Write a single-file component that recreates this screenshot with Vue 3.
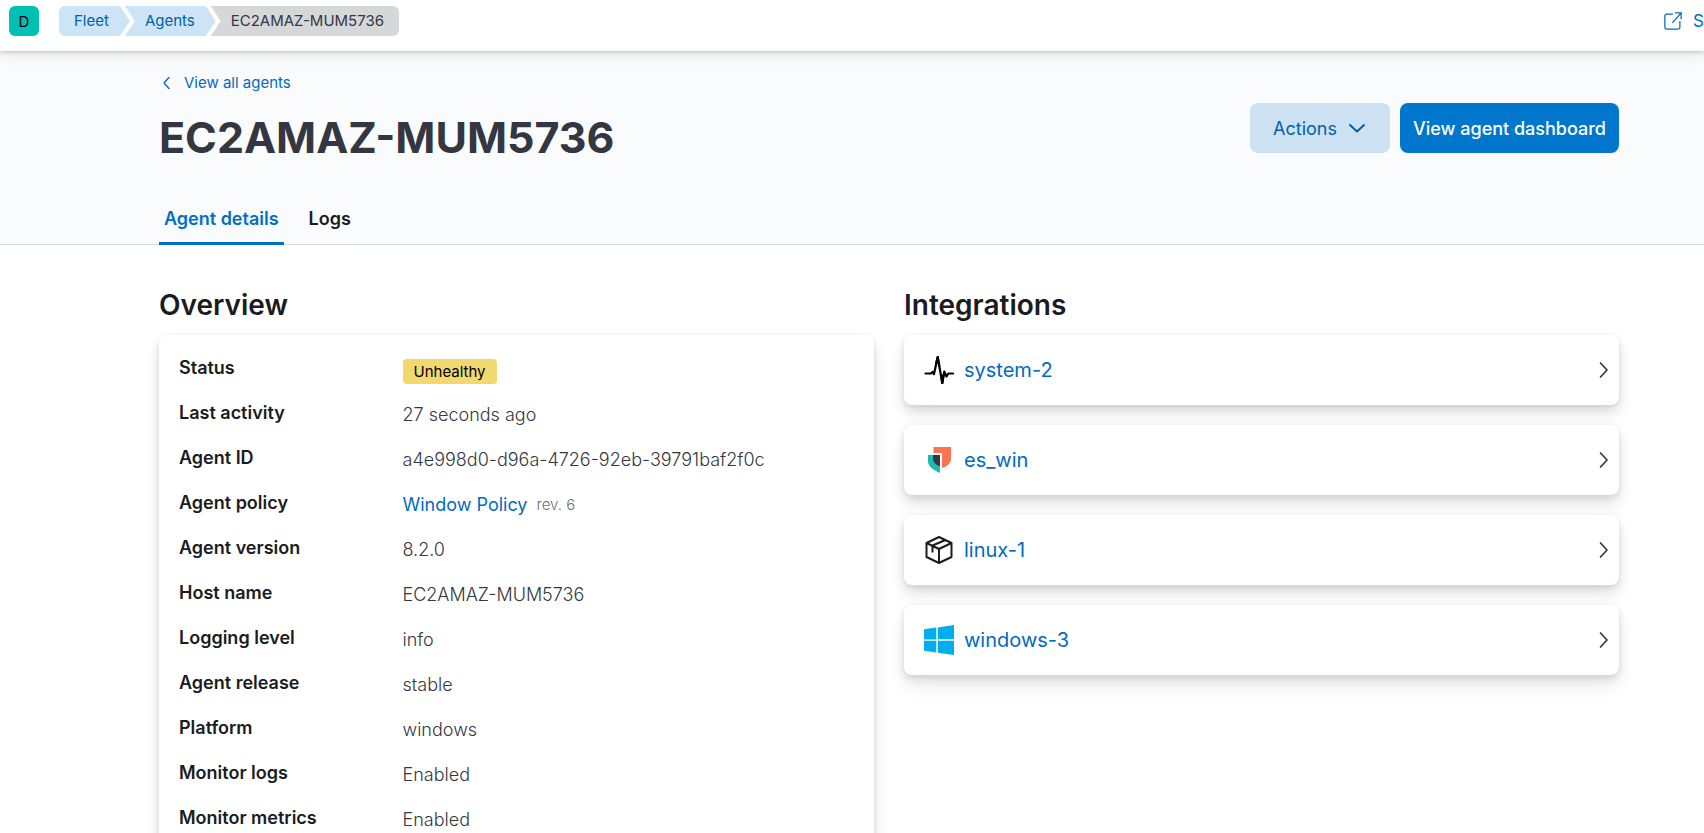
<script setup>
const details = [
  { label: 'Status', badge: 'Unhealthy' },
  { label: 'Last activity', value: '27 seconds ago' },
  { label: 'Agent ID', value: 'a4e998d0-d96a-4726-92eb-39791baf2f0c' },
  { label: 'Agent policy', link: 'Window Policy', note: 'rev. 6' },
  { label: 'Agent version', value: '8.2.0' },
  { label: 'Host name', value: 'EC2AMAZ-MUM5736' },
  { label: 'Logging level', value: 'info' },
  { label: 'Agent release', value: 'stable' },
  { label: 'Platform', value: 'windows' },
  { label: 'Monitor logs', value: 'Enabled' },
  { label: 'Monitor metrics', value: 'Enabled' },
]

const integrations = [
  { name: 'system-2', icon: 'pulse' },
  { name: 'es_win', icon: 'shield' },
  { name: 'linux-1', icon: 'package' },
  { name: 'windows-3', icon: 'windows' },
]
</script>

<template>
  <div class="page">
    <header class="topbar">
      <button class="avatar" type="button">D</button>
      <nav class="crumbs" aria-label="Breadcrumb">
        <a class="crumb first" href="#">Fleet</a>
        <a class="crumb middle" href="#">Agents</a>
        <span class="crumb last" aria-current="page">EC2AMAZ-MUM5736</span>
      </nav>
      <a class="feedback" href="#">
        <svg width="20" height="20" viewBox="0 0 16 16" fill="none" stroke="currentColor">
          <path d="M8 2.5H2.9A1.4 1.4 0 0 0 1.5 3.9v9.200a1.400 1.400 0 0 0 1.400 1.400h9.200a1.400 1.400 0 0 0 1.400-1.400V8" />
          <path d="M7.500 9.500 14.300 1.700M9.500 1.500h5v5" />
        </svg>
        <span>S</span>
      </a>
    </header>

    <section class="hero">
      <div class="hero-row">
        <div class="heading">
          <a class="back" href="#">
            <svg width="14" height="14" viewBox="0 0 14 14" fill="none" stroke="currentColor" stroke-width="1.300" stroke-linecap="round" stroke-linejoin="round">
              <path d="M10 1.500 5 7l5 5.500" />
            </svg>
            <span>View all agents</span>
          </a>
          <h1>EC2AMAZ-MUM5736</h1>
        </div>
        <div class="buttons">
          <button class="btn light" type="button">
            <span>Actions</span>
            <svg width="20" height="20" viewBox="0 0 20 20" fill="none" stroke="currentColor" stroke-width="2" stroke-linecap="round" stroke-linejoin="round">
              <path d="M3 7l7 6.500L17 7" />
            </svg>
          </button>
          <button class="btn fill" type="button">View agent dashboard</button>
        </div>
      </div>
      <nav class="tabs" aria-label="Agent sections">
        <a class="tab active" href="#" aria-current="page">Agent details</a>
        <a class="tab" href="#">Logs</a>
      </nav>
    </section>

    <main class="content">
      <section>
        <h2>Overview</h2>
        <dl class="panel details">
          <div v-for="row in details" :key="row.label" class="row">
            <dt>{{ row.label }}</dt>
            <dd>
              <span v-if="row.badge" class="badge">{{ row.badge }}</span>
              <template v-else-if="row.link">
                <a href="#">{{ row.link }}</a><span class="note">{{ row.note }}</span>
              </template>
              <template v-else>{{ row.value }}</template>
            </dd>
          </div>
        </dl>
      </section>

      <section>
        <h2>Integrations</h2>
        <ul class="cards">
          <li v-for="item in integrations" :key="item.name" class="panel card">
            <svg v-if="item.icon === 'pulse'" width="30" height="30" viewBox="0 0 30 30" fill="none" stroke="#000" stroke-width="2.200" stroke-linecap="round" stroke-linejoin="round">
              <path d="M1.500 18.500H7l1.500-1.500 1.500 2L13.700 2l4.600 26 2-11.500 2.200 5 1.800-3H29" />
              <path d="M12 9l1.700-7 1.600 9M17 20l1.300 8 1.200-8" />
            </svg>
            <svg v-else-if="item.icon === 'shield'" width="30" height="30" viewBox="0 0 30 30">
              <path fill="#fa744e" d="M9.500 2H27v11.500c0 4.500-3 7.500-9 9.500V8H9.500z" />
              <path fill="#1dbab0" d="M4 10h5v4c0 3.500 2.500 6 7 7.500V28C8 24.500 4 21 4 16z" />
              <path fill="#343741" d="M9 10h7v11.500C11.500 20 9 17.500 9 14z" />
            </svg>
            <svg v-else-if="item.icon === 'package'" width="30" height="30" viewBox="0 0 30 30" fill="none" stroke="#1a1c21" stroke-width="2" stroke-linejoin="round">
              <path d="M15 2 27.500 8v14L15 28 2.500 22V8z" />
              <path d="M2.500 8 15 14l12.500-6M15 14v14M8.500 17.500v-7L21.500 5" />
            </svg>
            <svg v-else width="30" height="30" viewBox="0 0 30 30" fill="#00adef">
              <path d="M0 4.300 12.300 2.600v11.800H0zM13.800 2.400 30 0v14.300H13.800zM0 15.800h12.300v11.700L0 25.800zM13.800 15.800H30V30l-16.200-2.300z" />
            </svg>
            <a class="name" href="#">{{ item.name }}</a>
            <button class="expand" type="button" :aria-label="'Expand ' + item.name">
              <svg width="20" height="20" viewBox="0 0 20 20" fill="none" stroke="#343741" stroke-width="1.700" stroke-linecap="round" stroke-linejoin="round">
                <path d="M6.500 3l6.500 7-6.500 7" />
              </svg>
            </button>
          </li>
        </ul>
      </section>
    </main>
  </div>
</template>

<style>
body {
  background: #fff;
  overflow: hidden;
}
</style>

<style scoped>
.page {
  font-family: Inter, "Liberation Sans", sans-serif;
  font-size: 18px;
  line-height: 25px;
  color: #343741;
}
a {
  color: #006bc0;
  text-decoration: none;
}
button {
  border: 0;
  font: inherit;
  cursor: pointer;
}
svg {
  flex: none;
  display: block;
}
h1,
h2,
dl,
dd,
ul {
  margin: 0;
  padding: 0;
}

.topbar {
  position: relative;
  display: flex;
  align-items: center;
  box-sizing: border-box;
  height: 51px;
  padding: 0 0 9px 9px;
  background: #fff;
  font-size: 15px;
  box-shadow: 0 1px 4px rgba(0, 0, 0, 0.22), 0 5px 12px rgba(0, 0, 0, 0.05), 0 10px 15px rgba(0, 0, 0, 0.02);
}
.avatar {
  width: 30px;
  height: 30px;
  padding: 0;
  border-radius: 6px;
  background: #00bfb3;
  color: #000;
}
.crumbs {
  display: flex;
  margin-left: 20px;
  line-height: 30px;
}
.crumb {
  background: #cce4f5;
  color: #0061a6;
}
.first {
  padding: 0 21px 0 15px;
  border-radius: 6px 0 0 6px;
  clip-path: polygon(0 0, calc(100% - 10px) 0, 100% 50%, calc(100% - 10px) 100%, 0 100%);
}
.middle {
  margin-left: -5px;
  padding: 0 21px 0 20px;
  clip-path: polygon(0 0, calc(100% - 10px) 0, 100% 50%, calc(100% - 10px) 100%, 0 100%, 10px 50%);
}
.last {
  margin-left: -5px;
  padding: 0 15px 0 20px;
  border-radius: 0 6px 6px 0;
  background: #d6d7d9;
  color: #343741;
  clip-path: polygon(0 0, 100% 0, 100% 100%, 0 100%, 10px 50%);
}
.feedback {
  display: flex;
  align-items: center;
  gap: 10px;
  margin-left: auto;
  font-size: 17px;
}

.hero {
  padding: 20px 85px 0 159px;
  border-bottom: 1px solid #d3dae6;
  background: #fafbfd;
}
.hero-row {
  display: flex;
  align-items: center;
  justify-content: space-between;
}
.back {
  display: flex;
  align-items: center;
  gap: 11px;
  font-size: 15px;
  line-height: 24px;
}
h1 {
  margin-top: 17px;
  font-size: 43px;
  line-height: 50px;
  font-weight: 700;
}
.buttons {
  display: flex;
  gap: 10px;
  margin-top: 23px;
}
.btn {
  display: flex;
  align-items: center;
  gap: 10px;
  height: 50px;
  border-radius: 8px;
}
.light {
  padding: 0 23px;
  background: #cce2f2;
  color: #0061a6;
}
.fill {
  padding: 0 13px;
  background: #0077cc;
  color: #fff;
  font-weight: 500;
}
.tabs {
  display: flex;
  gap: 20px;
  margin: 34px 0 -1px;
}
.tab {
  padding: 10px 5px 11px;
  border-bottom: 3px solid transparent;
  color: #1a1c21;
  font-weight: 600;
}
.active {
  border-color: #0071c2;
  color: #0071c2;
}

.content {
  display: grid;
  grid-template-columns: 1fr 1fr;
  gap: 30px;
  padding: 40px 85px 0 159px;
}
h2 {
  margin-bottom: 10px;
  color: #1a1c21;
  font-size: 28px;
  line-height: 40px;
  font-weight: 600;
}
.panel {
  border-radius: 8px;
  background: #fff;
  box-shadow: 0 1px 5px rgba(0, 0, 0, 0.06), 0 4px 8px rgba(0, 0, 0, 0.07), 0 7px 15px rgba(0, 0, 0, 0.07), 0 15px 20px rgba(0, 0, 0, 0.04);
}
.details {
  display: grid;
  gap: 16px;
  padding: 20px;
}
.row {
  display: grid;
  grid-template-columns: 3fr 7fr;
  column-gap: 30px;
}
dt {
  color: #1a1c21;
  font-weight: 600;
}
dd {
  display: flex;
  align-items: flex-end;
  height: 29px;
  line-height: 29px;
  font-weight: 300;
}
dd a {
  font-weight: 400;
}
.note {
  margin-left: 9px;
  color: #69707d;
  font-size: 15px;
}
.badge {
  padding: 0 11px;
  border-radius: 4px;
  background: #f1d86f;
  color: #000;
  font-size: 15px;
  line-height: 25px;
  font-weight: 400;
}

.cards {
  display: grid;
  gap: 20px;
  list-style: none;
}
.card {
  display: flex;
  align-items: center;
  gap: 10px;
  padding: 20px 5px 20px 20px;
}
.name {
  font-size: 20px;
  line-height: 30px;
}
.expand {
  margin-left: auto;
  padding: 0;
  background: none;
}
</style>
